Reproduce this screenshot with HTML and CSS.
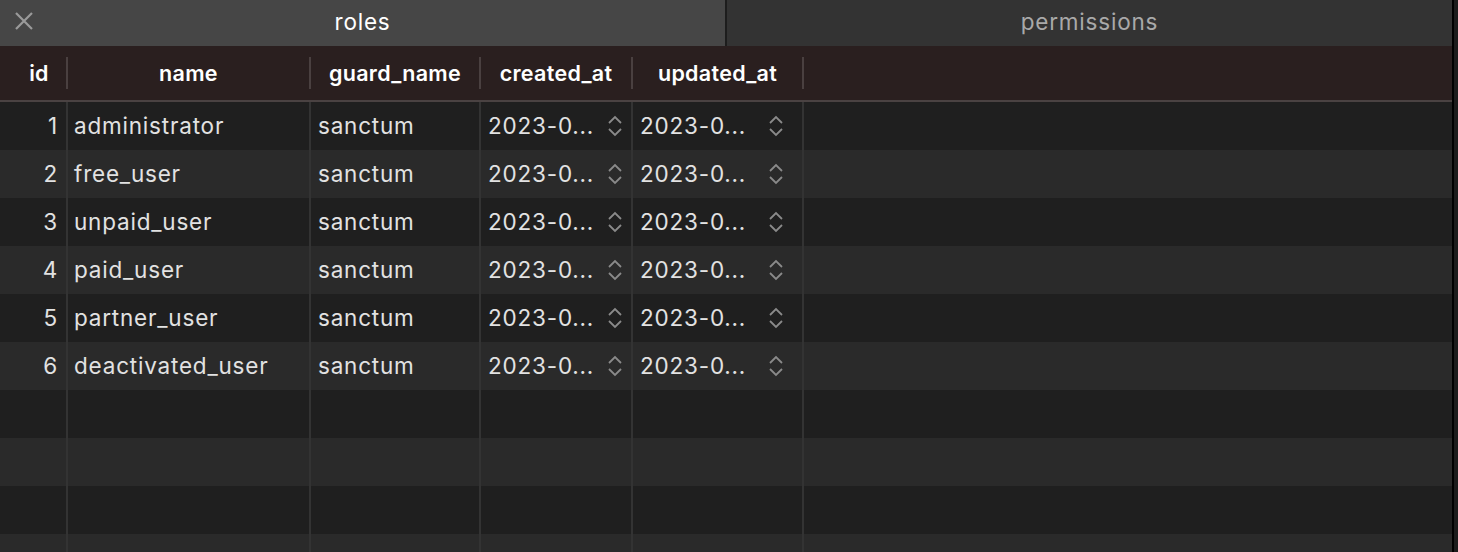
FILE: index.html
```html
<!DOCTYPE html>
<html>
<head>
    <title>roles</title>
    <link rel="stylesheet" href="styles.css">
</head>
<body>
    <section class="window">
        <nav class="tabs">
            <div class="tab active">
                <svg class="close" width="20" height="20" viewBox="0 0 20 20">
                    <path d="M2 2 L18 18 M18 2 L2 18" stroke="#9a9a9a" stroke-width="2.2" fill="none"/>
                </svg>
                <span>roles</span>
            </div>
            <div class="tab">
                <span>permissions</span>
            </div>
        </nav>

        <section class="grid">
            <div class="row head">
                <div class="cell c-id">id</div>
                <div class="cell c-name">name</div>
                <div class="cell c-guard">guard_name</div>
                <div class="cell c-created">created_at</div>
                <div class="cell c-updated">updated_at</div>
                <div class="cell c-rest"></div>
            </div>
            <div id="rows"></div>
        </section>
    </section>

    <script type="text/javascript">
    var roles = ["administrator", "free_user", "unpaid_user", "paid_user", "partner_user", "deactivated_user"];
    var stepper = '<svg class="stepper" width="16" height="22" viewBox="0 0 16 22">' +
        '<path d="M2 8 L8 2 L14 8 M2 14 L8 20 L14 14" stroke="#8a8a8a" stroke-width="1.8" fill="none"/></svg>';

    function build() {
        var html = "";
        for (var i = 0; i < 10; i++) {
            if (i < roles.length) {
                html += '<div class="row">' +
                    '<div class="cell c-id">' + (i + 1) + '</div>' +
                    '<div class="cell c-name">' + roles[i] + '</div>' +
                    '<div class="cell c-guard">sanctum</div>' +
                    '<div class="cell c-created"><span class="date">2023-0...</span>' + stepper + '</div>' +
                    '<div class="cell c-updated"><span class="date">2023-0...</span>' + stepper + '</div>' +
                    '<div class="cell c-rest"></div></div>';
            } else {
                html += '<div class="row">' +
                    '<div class="cell c-id"></div><div class="cell c-name"></div>' +
                    '<div class="cell c-guard"></div><div class="cell c-created"></div>' +
                    '<div class="cell c-updated"></div><div class="cell c-rest"></div></div>';
            }
        }
        document.getElementById("rows").innerHTML = html;
    }
    build();
    </script>
</body>
</html>
```

FILE: styles.css
```css
html, body {
    margin: 0;
    height: 552px;
    overflow: hidden;
    background-color: #1c1c1c;
    font-family: Inter, "Noto Sans", sans-serif;
}
.window {
    width: 1452px;
    height: 552px;
    border-right: 2px solid #000;
    overflow: hidden;
}
.tabs {
    display: flex;
    height: 46px;
}
.tab {
    flex: 1;
    display: flex;
    align-items: center;
    justify-content: center;
    background-color: #333333;
    color: #a9a9a9;
    font-size: 22.5px;
    letter-spacing: 0.8px;
    padding-bottom: 3px;
    box-sizing: border-box;
}
.tab.active {
    flex: 0 0 727px;
    background-color: #464646;
    color: #ffffff;
    border-right: 2px solid #1d1d1d;
    position: relative;
}
.close {
    position: absolute;
    left: 14px;
    top: 11px;
}
.row {
    display: flex;
    height: 48px;
    background-color: #1f1f1f;
}
#rows .row:nth-child(even) {
    background-color: #2a2a2a;
}
.cell {
    box-sizing: border-box;
    border-right: 2px solid #333333;
    display: flex;
    align-items: center;
    padding: 0 7px 2px 7px;
    color: #e2e2e2;
    font-size: 22.5px;
    letter-spacing: 0.8px;
    white-space: nowrap;
}
.c-id {
    width: 68px;
    justify-content: flex-end;
    padding-right: 8px;
}
.c-name {
    width: 243px;
    padding-left: 6px;
}
.c-guard {
    width: 170px;
}
.c-created {
    width: 152px;
    justify-content: space-between;
    padding-right: 8px;
}
.c-updated {
    width: 171px;
    justify-content: space-between;
    padding-right: 18px;
}
.c-rest {
    flex: 1;
    border-right: none;
}
.row.head {
    height: 56px;
    box-sizing: border-box;
    background-color: #2a1f1f;
    border-bottom: 2px solid #4a4242;
    align-items: center;
}
.head .cell {
    height: 32px;
    border-right-color: #4a4040;
    justify-content: center;
    font-weight: 600;
    font-size: 21.5px;
    letter-spacing: 0.3px;
    color: #ffffff;
    padding: 0;
}
.head .c-id {
    padding-left: 12px;
}
.head .c-rest {
    border-right: none;
}
.stepper {
    flex: none;
    margin-top: 2px;
}
```
